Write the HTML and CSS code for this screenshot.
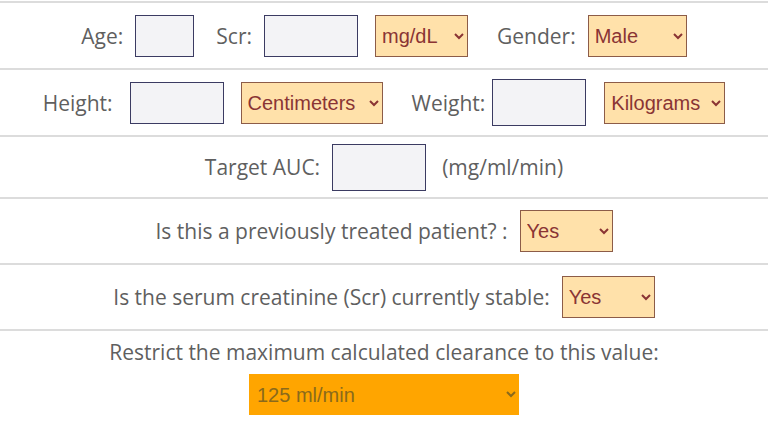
FILE: index.html
```html
<!DOCTYPE html>
<html lang="en">
<head>
  <meta charset="UTF-8" />
  <title>Carboplatin Dose Calculator</title>
  <link rel="stylesheet" href="styles.css">
</head>
<body>
<div class="calc">
  <!-- Age / Scr / Gender -->
  <div class="row">
    <label class="lbl" for="age">Age:</label>
    <input class="box box-sm" type="text" id="age" />
    <label class="lbl gap-l" for="scr">Scr:</label>
    <input class="box" type="text" id="scr" />
    <select class="pick pick-unit" id="scrUnit">
      <option>mg/dL</option>
      <option>&micro;mol/L</option>
    </select>
    <label class="lbl gap-xl" for="gender">Gender:</label>
    <select class="pick pick-gender" id="gender">
      <option>Male</option>
      <option>Female</option>
    </select>
  </div>
  <!-- Height / Weight -->
  <div class="row">
    <label class="lbl" for="height">Height:</label>
    <input class="box gap-m" type="text" id="height" />
    <select class="pick pick-cm" id="heightUnit">
      <option>Centimeters</option>
      <option>Inches</option>
    </select>
    <label class="lbl gap-xl" for="weight">Weight:</label>
    <input class="box box-tall tight" type="text" id="weight" />
    <select class="pick pick-kg" id="weightUnit">
      <option>Kilograms</option>
      <option>Pounds</option>
    </select>
  </div>
  <!-- Target AUC -->
  <div class="row row-auc">
    <label class="lbl" for="auc">Target AUC:</label>
    <input class="box box-tall" type="text" id="auc" />
    <span class="lbl unit">(mg/ml/min)</span>
  </div>
  <div class="row row-q">
    <label class="lbl" for="treated">Is this a previously treated patient? :</label>
    <select class="pick pick-yes tight" id="treated">
      <option>Yes</option>
      <option>No</option>
    </select>
  </div>
  <div class="row row-q">
    <label class="lbl" for="stable">Is the serum creatinine (Scr) currently stable:</label>
    <select class="pick pick-yes" id="stable">
      <option>Yes</option>
      <option>No</option>
    </select>
  </div>
  <div class="row row-last">
    <label class="lbl" for="maxcl">Restrict the maximum calculated clearance to this value:</label>
    <select class="pick pick-max" id="maxcl">
      <option>125 ml/min</option>
      <option>150 ml/min</option>
      <option>No limit</option>
    </select>
  </div>
</div>
</body>
</html>
```

FILE: styles.css
```css
body {
  margin: 0;
  background: #fff;
  font-family: 'Open Sans', sans-serif;
}
.calc {
  border-top: 2px solid #dcdcdc;
  margin-top: 1px;
}
.row {
  display: flex;
  align-items: center;
  justify-content: center;
  height: 67px;
  box-sizing: border-box;
  border-bottom: 2px solid #dcdcdc;
}
.row-auc {
  height: 62px;
}
.row-q {
  height: 66px;
}
.row-last {
  flex-direction: column;
  justify-content: flex-start;
  height: auto;
  border-bottom: none;
  padding-top: 7px;
}
.lbl {
  font-size: 21px;
  color: #5f5f5f;
}
.box {
  width: 94px;
  height: 42px;
  margin-left: 12px;
  background: #f3f3f6;
  border: 1px solid #3b3b62;
  box-sizing: border-box;
  padding: 0 6px;
  font-size: 18px;
}
.box-sm {
  width: 59px;
}
.box-tall {
  height: 47px;
}
.gap-m {
  margin-left: 17px;
}
.gap-l {
  margin-left: 22px;
}
.gap-xl {
  margin-left: 29px;
}
.tight {
  margin-left: 7px;
}
.pick {
  height: 42px;
  margin-left: 12px;
  background-color: #ffe1aa;
  border: 1px solid #8c5c48;
  border-radius: 0;
  color: #8a3434;
  font-family: 'Liberation Sans', Arial, sans-serif;
  font-size: 20px;
  box-sizing: border-box;
  padding: 0 2px;
}
.pick-unit {
  width: 93px;
  margin-left: 17px;
}
.pick-gender {
  width: 99px;
}
.pick-cm {
  width: 142px;
  margin-left: 17px;
}
.pick-kg {
  width: 121px;
  margin-left: 18px;
}
.pick-yes {
  width: 93px;
}
.unit {
  margin-left: 16px;
}
.pick-max {
  width: 270px;
  height: 41px;
  margin: 8px 0 0;
  background-color: #ffa500;
  border: none;
  color: #8a6a1c;
  padding-left: 4px;
}
```
